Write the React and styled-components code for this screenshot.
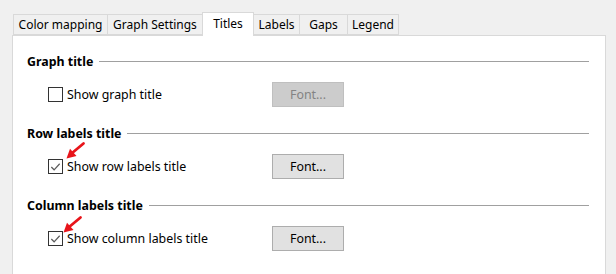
import React from 'react'
import styled, { createGlobalStyle } from 'styled-components'

const GlobalStyle = createGlobalStyle`
  html, body {
    margin: 0;
    padding: 0;
    background: #f0f0f0;
  }
  body {
    font-family: "Noto Sans", "Open Sans", sans-serif;
    font-size: 12.4px;
    color: #000;
  }
`

const tabs = [
  { label: 'Color mapping', width: 95 },
  { label: 'Graph Settings', width: 96 },
  { label: 'Titles', width: 52, active: true },
  { label: 'Labels', width: 47 },
  { label: 'Gaps', width: 49 },
  { label: 'Legend', width: 52 },
]

const sections = [
  { title: 'Graph title', label: 'Show graph title', checked: false, disabled: true },
  { title: 'Row labels title', label: 'Show row labels title', checked: true, arrow: { x: 14, y: -18 } },
  { title: 'Column labels title', label: 'Show column labels title', checked: true, arrow: { x: 11, y: -16 } },
]

const App = () => {
  return (
    <Window>
      <GlobalStyle />
      <TabBar>
        {tabs.map((t) => (
          <Tab key={t.label} $w={t.width} $active={t.active}>{t.label}</Tab>
        ))}
      </TabBar>
      <Panel>
        {sections.map((s) => (
          <Section key={s.title}>
            <Heading>
              <span>{s.title}</span>
              <Rule />
            </Heading>
            <Row>
              <CheckLabel>
                <Box>
                  {s.checked && (
                    <svg width="14" height="14" viewBox="0 0 14 14">
                      <path d="M2.5 7 L5.5 10 L11.5 3.5" fill="none" stroke="#5c5c5c" strokeWidth="1.3" />
                    </svg>
                  )}
                  {s.arrow && <Arrow style={{ left: s.arrow.x, top: s.arrow.y }} />}
                </Box>
                <span>{s.label}</span>
              </CheckLabel>
              <FontButton disabled={s.disabled}>Font...</FontButton>
            </Row>
          </Section>
        ))}
      </Panel>
    </Window>
  )
}

export default App

const Arrow = (props) => (
  <ArrowSvg width="24" height="20" viewBox="0 0 24 20" {...props}>
    <path d="M8.5 11.5 L20.5 1.5" stroke="#e8141a" strokeWidth="2.8" strokeLinecap="round" />
    <polygon points="3.5,16.5 13.5,14 7,6.8" fill="#e8141a" />
  </ArrowSvg>
)

const Window = styled.div`
width: 616px;
height: 274px;
overflow: hidden;
box-sizing: border-box;
padding: 12px 10px 0 12px;
`

const TabBar = styled.div`
display: flex;
align-items: flex-end;
height: 23px;
padding-left: 1px;
position: relative;
z-index: 2;
`

const Tab = styled.div`
box-sizing: border-box;
width: ${p => p.$w}px;
height: ${p => p.$active ? 24 : 21}px;
margin-left: -1px;
margin-bottom: ${p => p.$active ? -1 : 0}px;
&:first-child { margin-left: 0; }
border: 1px solid #d9d9d9;
border-bottom: ${p => p.$active ? 'none' : '1px solid #d9d9d9'};
background: ${p => p.$active ? '#fff' : '#f0f0f0'};
display: flex;
align-items: center;
justify-content: center;
padding-bottom: ${p => p.$active ? 3 : 0}px;
font-size: 12px;
white-space: nowrap;
position: relative;
z-index: ${p => p.$active ? 2 : 1};
`

const Panel = styled.div`
box-sizing: border-box;
height: 250px;
background: #fff;
border: 1px solid #d9d9d9;
padding: 17px 16px 0 14px;
display: flex;
flex-direction: column;
gap: 18px;
`

const Section = styled.div`
display: flex;
flex-direction: column;
gap: 13px;
`

const Heading = styled.div`
display: flex;
align-items: center;
gap: 6px;
height: 16px;
font-weight: bold;
white-space: nowrap;
`

const Rule = styled.div`
flex: 1;
height: 1px;
background: #a0a0a0;
`

const Row = styled.div`
display: grid;
grid-template-columns: 224px 72px;
align-items: center;
padding-left: 21px;
height: 25px;
`

const CheckLabel = styled.label`
display: flex;
align-items: center;
gap: 4px;
white-space: nowrap;
`

const Box = styled.span`
position: relative;
box-sizing: border-box;
width: 15px;
height: 15px;
border: 1px solid #333;
background: #fff;
display: flex;
align-items: center;
justify-content: center;
`

const ArrowSvg = styled.svg`
position: absolute;
overflow: visible;
`

const FontButton = styled.button`
box-sizing: border-box;
width: 72px;
height: 25px;
font-family: inherit;
font-size: 12.4px;
padding: 0;
background: ${p => p.disabled ? '#cccccc' : '#e1e1e1'};
border: 1px solid ${p => p.disabled ? '#bfbfbf' : '#adadad'};
color: ${p => p.disabled ? '#838383' : '#000'};
`
